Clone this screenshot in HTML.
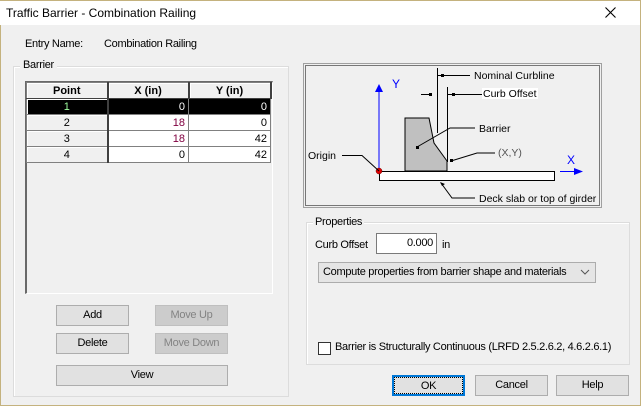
<!DOCTYPE html>
<html><head><style>
*{box-sizing:border-box;margin:0;padding:0}
body{width:641px;height:406px;background:#f0f0f0;font-family:"Liberation Sans",sans-serif;font-size:11px;letter-spacing:-0.3px;color:#000;position:relative;overflow:hidden}
.a{position:absolute;white-space:nowrap}
.win{position:absolute;left:0;top:0;width:641px;height:406px;border:1px solid #c4b27e;border-top:none}
.title{position:absolute;left:0;top:0;width:641px;height:25px;background:#fff;border-top:1px solid #c4b27e;border-right:1px solid #c4b27e}
.grp{position:absolute;border:1px solid #dcdcdc;box-shadow:inset 1px 1px 0 #fff}
.btn{position:absolute;height:21px;background:#e1e1e1;border:1px solid #adadad;text-align:center;line-height:19px}
.dis{background:#cccccc;border-color:#bfbfbf;color:#838383}
table{border-collapse:collapse;position:absolute;left:26px;top:82px}
td{height:16px;border:1px solid #808080;padding:0 3px;text-align:right;letter-spacing:0}
td.h{background:#f0f0f0;text-align:center;font-weight:bold;border-right:2px solid #404040;border-bottom:1px solid #404040;box-shadow:inset 1px 1px 0 #fff}
td.p{background:#f0f0f0;text-align:center;box-shadow:inset 1px 1px 0 #fff;border-right:2px solid #404040}
</style></head><body>
<div class="win"></div>
<div class="title"></div>
<div class="a" style="left:6px;top:6px;font-size:12px;letter-spacing:0">Traffic Barrier - Combination Railing</div>
<svg class="a" style="left:604px;top:6px" width="14" height="14"><path d="M1.5 1.5L11.5 11.5M11.5 1.5L1.5 11.5" stroke="#000" stroke-width="1.1"/></svg>
<div class="a" style="left:25px;top:38px">Entry Name:</div>
<div class="a" style="left:104px;top:38px">Combination Railing</div>

<div class="grp" style="left:13px;top:66px;width:276px;height:331px"></div>
<div class="a" style="left:20px;top:59px;background:#f0f0f0;padding:0 3px">Barrier</div>
<div class="a" style="left:25px;top:81px;width:248px;height:213px;background:#f0f0f0;border:1px solid #a0a0a0;border-left:2px solid #696969;border-top:2px solid #696969;border-right:1px solid #fff;border-bottom:1px solid #fff"></div>
<table>
<tr><td class="h" style="width:81px">Point</td><td class="h" style="width:81px">X (in)</td><td class="h" style="width:82px">Y (in)</td></tr>
<tr><td class="p" style="background:#000;color:#a0ffa0">1</td><td style="background:#000;color:#fff">0</td><td style="background:#000;color:#fff">0</td></tr>
<tr><td class="p">2</td><td style="background:#fff;color:#800040">18</td><td style="background:#fff">0</td></tr>
<tr><td class="p">3</td><td style="background:#fff;color:#800040">18</td><td style="background:#fff">42</td></tr>
<tr><td class="p">4</td><td style="background:#fff">0</td><td style="background:#fff">42</td></tr>
</table>
<div class="btn" style="left:56px;top:305px;width:73px">Add</div>
<div class="btn dis" style="left:155px;top:305px;width:73px">Move Up</div>
<div class="btn" style="left:56px;top:333px;width:73px">Delete</div>
<div class="btn dis" style="left:155px;top:333px;width:73px">Move Down</div>
<div class="btn" style="left:56px;top:365px;width:172px">View</div>

<svg class="a" style="left:303px;top:63px;letter-spacing:0" width="299" height="145" viewBox="303 63 299 145" font-family="Liberation Sans" font-size="10.5">
<rect x="303.5" y="63.5" width="298" height="144" fill="#f0f0f0" stroke="#a0a0a0"/>
<rect x="305.5" y="65.5" width="294" height="140" fill="none" stroke="#777"/>
<line x1="379" y1="171" x2="379" y2="90" stroke="#0000ff"/>
<path d="M375 92L379 84L383 92Z" fill="#0000ff"/>
<text x="392" y="88" fill="#0000ff" font-size="12">Y</text>
<line x1="437.5" y1="68" x2="437.5" y2="133" stroke="#000"/>
<line x1="437" y1="75.5" x2="470" y2="75.5" stroke="#000"/>
<rect x="441" y="74" width="3" height="3"/>
<text x="474" y="79">Nominal Curbline</text>
<line x1="447.5" y1="87" x2="447.5" y2="162" stroke="#000"/>
<line x1="421" y1="94.5" x2="432" y2="94.5" stroke="#000"/>
<rect x="429" y="93" width="3" height="3"/>
<line x1="448" y1="94.5" x2="483" y2="94.5" stroke="#000"/>
<rect x="452" y="93" width="3" height="3"/>
<rect x="482" y="88" width="56" height="11" fill="#fff"/>
<text x="483" y="97">Curb Offset</text>
<path d="M405 118H429L434 143L447 161V171H405Z" fill="#c0c0c0" stroke="#000"/>
<polyline points="417,147 450,128 475,128" fill="none" stroke="#000"/>
<rect x="416" y="146" width="3" height="3"/>
<text x="479" y="132">Barrier</text>
<polyline points="451,161 477,153 495,153" fill="none" stroke="#000"/>
<rect x="450" y="159" width="3" height="3"/>
<text x="498" y="156" fill="#555">(X,Y)</text>
<rect x="379.5" y="171.5" width="175" height="9" fill="#fff" stroke="#000"/>
<circle cx="379" cy="171" r="3" fill="#e00000" stroke="#600" stroke-width=".5"/>
<text x="308" y="159">Origin</text>
<polyline points="342,155.5 362,155.5 379,171" fill="none" stroke="#000"/>
<text x="567" y="164" fill="#0000ff" font-size="12">X</text>
<line x1="560" y1="171.5" x2="578" y2="171.5" stroke="#0000ff"/>
<path d="M574 168L583 171.5L574 175Z" fill="#0000ff"/>
<polyline points="441,183 452,198 475,198" fill="none" stroke="#000"/>
<path d="M440 182L445 184L442 186Z"/>
<text x="479" y="202">Deck slab or top of girder</text>
</svg>

<div class="grp" style="left:306px;top:222px;width:324px;height:143px"></div>
<div class="a" style="left:313px;top:216px;background:#f0f0f0;padding:0 2px">Properties</div>
<div class="a" style="left:315px;top:239px">Curb Offset</div>
<div class="a" style="left:376px;top:233px;width:61px;height:21px;background:#fff;border:1px solid #7a7a7a;text-align:right;padding-right:3px;line-height:19px">0.000</div>
<div class="a" style="left:442px;top:239px">in</div>
<div class="a" style="left:318px;top:262px;width:278px;height:21px;background:#e5e5e5;border:1px solid #acacac;padding-left:4px;line-height:19px">Compute properties from barrier shape and materials</div>
<svg class="a" style="left:580px;top:269px" width="10" height="6"><path d="M1 1L5 5L9 1" fill="none" stroke="#555"/></svg>
<div class="a" style="left:318px;top:342px;width:13px;height:13px;background:#fff;border:1px solid #333"></div>
<div class="a" style="left:335px;top:341px">Barrier is Structurally Continuous (LRFD 2.5.2.6.2, 4.6.2.6.1)</div>
<div class="btn" style="left:392px;top:375px;width:73px;border:2px solid #0078d7;line-height:17px"><span style="outline:1px dotted #000;display:block;margin:1px;height:15px">OK</span></div>
<div class="btn" style="left:475px;top:375px;width:73px">Cancel</div>
<div class="btn" style="left:556px;top:375px;width:73px">Help</div>
</body></html>
